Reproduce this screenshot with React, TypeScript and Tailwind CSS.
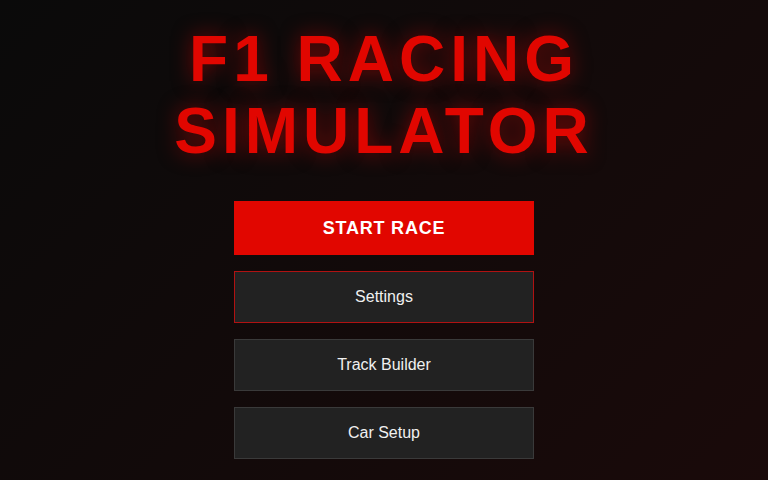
import React from "react";

export default function App() {
  const items = ["Settings", "Track Builder", "Car Setup"];
  return (
    <div
      className="min-h-screen w-full flex flex-col items-center justify-center pt-[2px] bg-[linear-gradient(135deg,#0a0a0a_0%,#1a0a0a_100%)]"
      style={{ fontFamily: '"Liberation Sans", Arial, sans-serif' }}
    >
      <h1 className="text-center text-[64px] leading-[72px] font-bold tracking-[5px] text-[#e10600] [text-shadow:0_0_20px_rgba(225,6,0,0.5)] mb-[34px]">
        F1 RACING
        <br />
        SIMULATOR
      </h1>
      <div className="flex flex-col gap-4 w-[300px]">
        <button className="h-[54px] w-full bg-[#e10600] text-white text-[18px] font-bold tracking-[0.8px]">
          START RACE
        </button>
        {items.map((t, i) => (
          <button
            key={t}
            className={
              i === 0
                ? "h-[52px] w-full bg-[#222222] text-[#f0f0f0] text-[16px] border border-[#b01212]"
                : "h-[52px] w-full bg-[#222222] text-[#f0f0f0] text-[16px] border border-[#3a3a3a]"
            }
          >
            {t}
          </button>
        ))}
      </div>
    </div>
  );
}
